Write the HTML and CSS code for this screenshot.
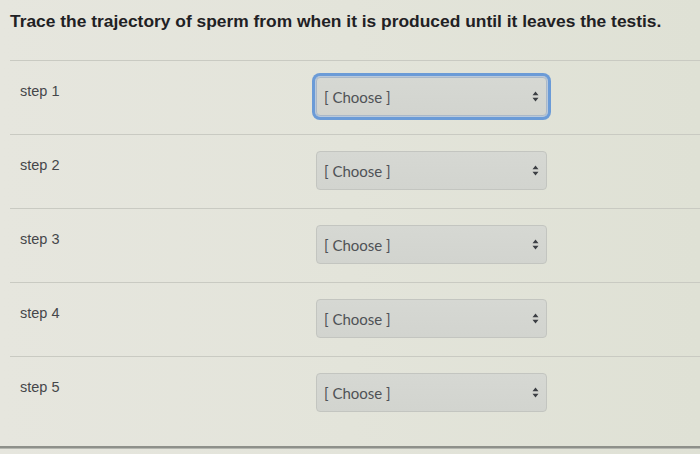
FILE: index.html
```html
<!DOCTYPE html>
<html>
<head>
<meta charset="utf-8">
<link rel="stylesheet" href="styles.css">
</head>
<body>
<div class="page">
  <h1 class="title">Trace the trajectory of sperm from when it is produced until it leaves the testis.</h1>
  <div class="rows">
    <div class="row">
      <div class="label">step 1</div>
      <div class="select focused"><span class="value">[ Choose ]</span><svg class="arrows" width="7" height="11" viewBox="0 0 7 11"><path d="M3.5 0.5 L6.5 4.2 L0.5 4.2 Z M3.5 10.5 L6.5 6.8 L0.5 6.8 Z" fill="#3c3f44"/></svg></div>
    </div>
    <div class="row">
      <div class="label">step 2</div>
      <div class="select"><span class="value">[ Choose ]</span><svg class="arrows" width="7" height="11" viewBox="0 0 7 11"><path d="M3.5 0.5 L6.5 4.2 L0.5 4.2 Z M3.5 10.5 L6.5 6.8 L0.5 6.8 Z" fill="#3c3f44"/></svg></div>
    </div>
    <div class="row">
      <div class="label">step 3</div>
      <div class="select"><span class="value">[ Choose ]</span><svg class="arrows" width="7" height="11" viewBox="0 0 7 11"><path d="M3.5 0.5 L6.5 4.2 L0.5 4.2 Z M3.5 10.5 L6.5 6.8 L0.5 6.8 Z" fill="#3c3f44"/></svg></div>
    </div>
    <div class="row">
      <div class="label">step 4</div>
      <div class="select"><span class="value">[ Choose ]</span><svg class="arrows" width="7" height="11" viewBox="0 0 7 11"><path d="M3.5 0.5 L6.5 4.2 L0.5 4.2 Z M3.5 10.5 L6.5 6.8 L0.5 6.8 Z" fill="#3c3f44"/></svg></div>
    </div>
    <div class="row">
      <div class="label">step 5</div>
      <div class="select"><span class="value">[ Choose ]</span><svg class="arrows" width="7" height="11" viewBox="0 0 7 11"><path d="M3.5 0.5 L6.5 4.2 L0.5 4.2 Z M3.5 10.5 L6.5 6.8 L0.5 6.8 Z" fill="#3c3f44"/></svg></div>
    </div>
  </div>
  <div class="footer"></div>
</div>
</body>
</html>
```

FILE: styles.css
```css
html, body {
  margin: 0;
  padding: 0;
}
body {
  width: 700px;
  height: 454px;
  overflow: hidden;
  background: linear-gradient(90deg, #e6e6de 0%, #e3e4da 50%, #dfe1d5 100%);
  font-family: "Liberation Sans", Arial, sans-serif;
}
.page {
  padding-top: 10px;
}
.title {
  margin: 0 0 0 10px;
  height: 50px;
  font-size: 17.4px;
  line-height: 22px;
  font-weight: bold;
  color: #1f2124;
}
.rows {
  margin-left: 10px;
  padding-bottom: 16px;
}
.row {
  display: flex;
  align-items: flex-start;
  border-top: 1px solid #c9cac2;
  padding: 16px 0 18px;
}
.label {
  width: 296px;
  padding: 5px 0 0 10px;
  font-size: 14.5px;
  line-height: 18px;
  color: #45474a;
}
.select {
  box-sizing: border-box;
  width: 231px;
  height: 39px;
  display: flex;
  align-items: center;
  justify-content: space-between;
  padding: 0 7px 0 7px;
  border: 1px solid #c3c5c0;
  border-radius: 4px;
  background: linear-gradient(180deg, #d6d8d3 0%, #d2d4cf 100%);
}
.select.focused {
  box-shadow: 0 0 0 1px #b9c9dc, 0 0 0 4px #6b9bd7;
  border-color: #aab8c8;
}
.value {
  font-family: Lato, "Liberation Sans", sans-serif;
  font-size: 15px;
  color: #4f5256;
}
.arrows {
  display: block;
}
.footer {
  height: 0;
  border-top: 2px solid #8e908a;
  box-shadow: 0 1px 0 #b5b7b0;
}
```
